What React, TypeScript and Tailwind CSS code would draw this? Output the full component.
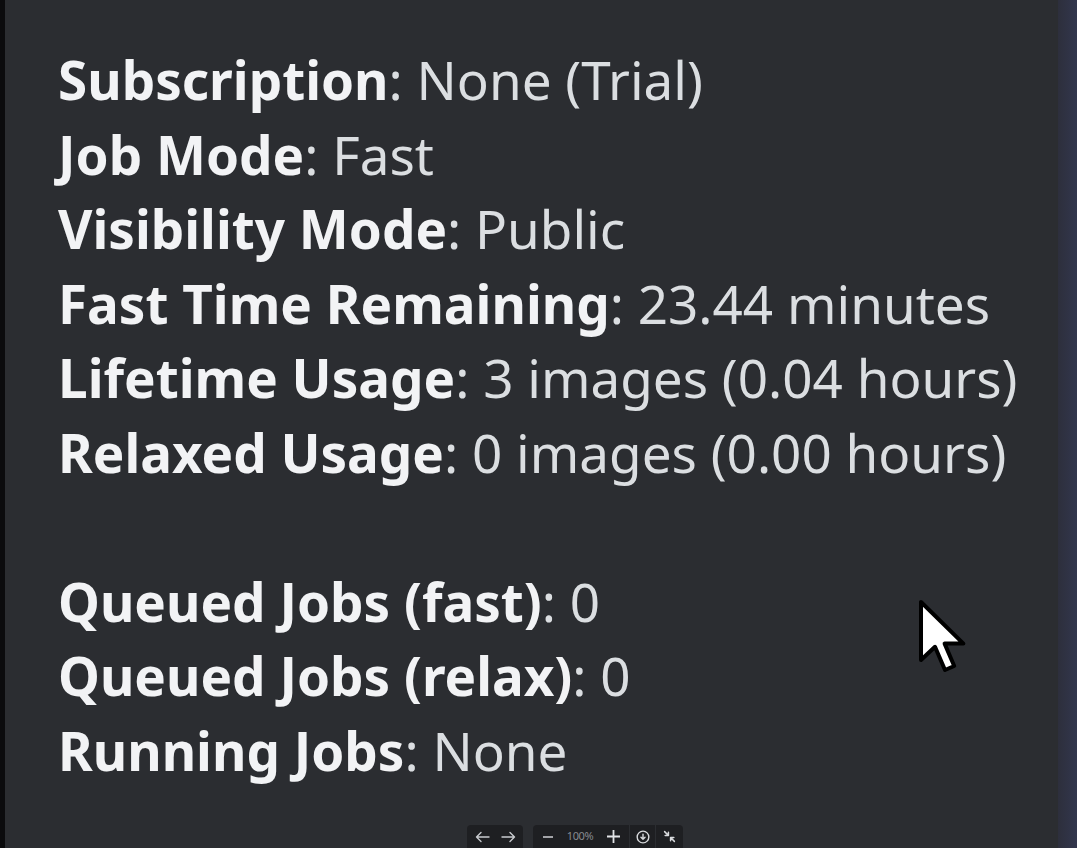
import React from "react";

type Row = { label: string; value: string } | null;

const rows: Row[] = [
  { label: "Subscription", value: "None (Trial)" },
  { label: "Job Mode", value: "Fast" },
  { label: "Visibility Mode", value: "Public" },
  { label: "Fast Time Remaining", value: "23.44 minutes" },
  { label: "Lifetime Usage", value: "3 images (0.04 hours)" },
  { label: "Relaxed Usage", value: "0 images (0.00 hours)" },
  null,
  { label: "Queued Jobs (fast)", value: "0" },
  { label: "Queued Jobs (relax)", value: "0" },
  { label: "Running Jobs", value: "None" },
];

const Cursor = () => (
  <svg width="52" height="80" viewBox="0 0 13 20" className="absolute left-[912px] top-[598px]">
    <path
      d="M1 1 L1 15.5 L4.5 12.2 L7 18 L9.3 17 L6.9 11.4 L11.6 11.4 Z"
      fill="#ffffff"
      stroke="#000000"
      strokeWidth="1"
      strokeLinejoin="round"
    />
  </svg>
);

const Arrow = ({ flip }: { flip?: boolean }) => (
  <svg width="15" height="12" viewBox="0 0 15 12" fill="none" stroke="#c9cbcf" strokeWidth="1.4" strokeLinecap="round" strokeLinejoin="round" className={flip ? "-scale-x-100" : ""}>
    <path d="M14 6H1.5M6 1.5 1.5 6 6 10.5" />
  </svg>
);

const App: React.FC = () => {
  return (
    <div className="w-[1077px] h-[848px] flex bg-[#2b2d31] overflow-hidden relative font-['Noto_Sans',sans-serif]">
      <div className="w-[5px] bg-[#0b0b0d]" />
      <div className="flex-1 flex flex-col relative">
        <div className="flex-1 pt-[43px] pl-[53px] text-[53px] leading-[74.5px]">
          {rows.map((r, i) =>
            r ? (
              <div key={i} className="whitespace-nowrap">
                <span className="font-bold text-[#f2f3f5]">{r.label}</span>
                <span className="text-[#dbdee1]">: {r.value}</span>
              </div>
            ) : (
              <div key={i} className="h-[74.5px]" />
            )
          )}
        </div>
        <div className="flex gap-[10px] h-[23px] pl-[462px]">
          <div className="w-[56px] flex items-center justify-center gap-[11px] rounded-t-[4px] bg-[#1e1f22]">
            <Arrow />
            <Arrow flip />
          </div>
          <div className="w-[150px] flex items-stretch rounded-t-[4px] bg-[#1e1f22] text-[#d0d2d6]">
            <div className="w-[97px] flex items-center justify-between pl-[10px] pr-[9px] border-r border-[#2b2d31]">
              <svg width="10" height="10" viewBox="0 0 10 10" stroke="#d0d2d6" strokeWidth="1.5">
                <path d="M0 5h10" />
              </svg>
              <span className="text-[11px] text-[#878a90] tracking-[-0.4px]">100%</span>
              <svg width="13" height="13" viewBox="0 0 13 13" stroke="#e2e4e7" strokeWidth="1.8">
                <path d="M0 6.5h13M6.5 0v13" />
              </svg>
            </div>
            <div className="w-[26px] flex items-center justify-center border-r border-[#2b2d31]">
              <svg width="14" height="14" viewBox="0 0 24 24" fill="none" stroke="#d8dadd" strokeWidth="2.4" strokeLinecap="round" strokeLinejoin="round">
                <circle cx="12" cy="12" r="10" />
                <path d="M12 7v9M8.5 12.5 12 16l3.5-3.5" />
              </svg>
            </div>
            <div className="flex-1 flex items-center justify-center">
              <svg width="13" height="13" viewBox="0 0 24 24" fill="none" stroke="#d8dadd" strokeWidth="2.8" strokeLinecap="round" strokeLinejoin="round">
                <path d="M3 3l7 7M10 4v6H4M21 21l-7-7M14 20v-6h6" />
              </svg>
            </div>
          </div>
        </div>
        <Cursor />
      </div>
      <div className="w-[19px] bg-gradient-to-r from-[#2d2f3c] to-[#32364d]" />
    </div>
  );
};

export default App;
